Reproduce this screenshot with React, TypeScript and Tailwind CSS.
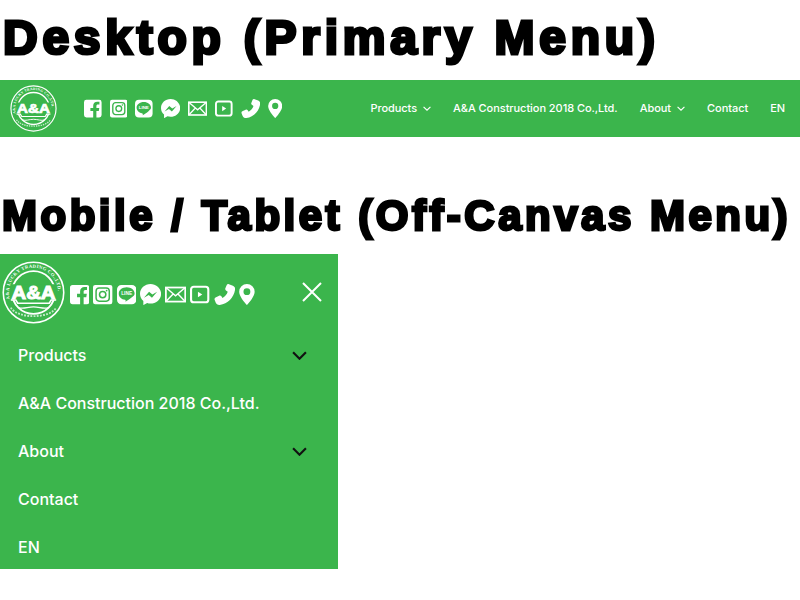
import { useId } from 'react';

const GREEN = '#3bb54c';

const icons = [
  { name: 'facebook', w: 22, box: '1 0 22 24' },
  { name: 'instagram', w: 22, box: '1 0 22 24' },
  { name: 'line', w: 22, box: '1 0 22 24' },
  { name: 'messenger', w: 24, box: '1 1 24 24' },
  { name: 'mail', w: 24, box: '1 -2 24 24' },
  { name: 'youtube', w: 22, box: '1 0 22 24' },
  { name: 'phone', w: 24, box: '1 1 24 24' },
  { name: 'pin', w: 18, box: '0 0 18 24' },
];

function IconShape({ name }: { name: string }) {
  switch (name) {
    case 'facebook':
      return (
        <path
          fillRule="evenodd"
          d="M4 1h16a3 3 0 0 1 3 3v16a3 3 0 0 1-3 3h-3.500v-8h3l.6-3.800h-3.600V8.800c0-1.200.5-2 2-2h1.800V3.500c-.8-.1-1.800-.2-2.800-.2-3 0-5 1.800-5 5v2.900H9v3.800h3.500v8H4a3 3 0 0 1-3-3V4a3 3 0 0 1 3-3z"
          fill="white"
        />
      );
    case 'instagram':
      return (
        <g>
          <rect x="1" y="1" width="22" height="22" rx="2.500" fill="white" />
          <rect x="4.500" y="4.500" width="15" height="15" rx="3.500" fill="none" stroke={GREEN} strokeWidth="1.700" />
          <circle cx="12" cy="12" r="3.600" fill="none" stroke={GREEN} strokeWidth="1.700" />
          <circle cx="16.500" cy="7.500" r="1" fill={GREEN} />
        </g>
      );
    case 'line':
      return (
        <g>
          <rect x="1" y="1" width="22" height="22" rx="5" fill="white" />
          <path d="M12 3.800c-5 0-9 3.200-9 7.200 0 3.500 3 6.400 7.200 7 .9.200.6 1.300.4 2.200 2-1 5-3 7.300-5 1.500-1.400 3.100-2.500 3.100-4.200 0-4-4-7.200-9-7.200z" fill={GREEN} />
          <text x="12" y="13" textAnchor="middle" fontSize="5.500" fontWeight="700" fill="white" fontFamily="'Liberation Sans', sans-serif">LINE</text>
        </g>
      );
    case 'messenger':
      return (
        <g>
          <path d="M13 1C6.400 1 1 5.900 1 12.200c0 3.300 1.400 6.100 3.800 8.100V25l4.300-2.400c1.200.4 2.600.6 3.900.6 6.600 0 12-5 12-11S19.600 1 13 1z" fill="white" />
          <path d="M5.500 16.500l5.800-6.800 3.800 3.200 5.400-3.200-5.900 7-3.700-3.200z" fill={GREEN} />
        </g>
      );
    case 'mail':
      return (
        <g fill="none" stroke="white">
          <rect x="2" y="2" width="22" height="16" strokeWidth="2" />
          <path d="M2 2l11 9.500L24 2M2 18l8.500-9M24 18l-8.500-9" strokeWidth="1.600" />
        </g>
      );
    case 'youtube':
      return (
        <g>
          <rect x="2.200" y="3.200" width="19.600" height="17.600" rx="3" fill="none" stroke="white" strokeWidth="2.400" />
          <path d="M10 8.800v6.400l5-3.200z" fill="white" />
        </g>
      );
    case 'phone':
      return (
        <path
          d="M18 1.200l4.500 1.800c1.700.8 2.700 2 2.500 4C24 16 17 23.600 7.500 24.800c-2.200.2-3.800-.7-4.600-2.700l-1.200-3.300c-.4-1 .1-2 1-2.500l4.100-2c1-.4 2-.2 2.600.7l1.200 1.800c3-1.500 5-4 6-7l-2-1.500c-.8-.6-1-1.500-.7-2.400l1.600-3.900c.4-.9 1.500-1.200 2.500-.8z"
          fill="white"
        />
      );
    default:
      return (
        <path
          fillRule="evenodd"
          d="M9 0a8.800 8.800 0 0 1 8.800 8.800C17.800 14 12 20.500 9 24 6 20.500.2 14 .2 8.800A8.800 8.800 0 0 1 9 0zm0 4.800a3.900 3.900 0 1 0 0 7.800 3.900 3.900 0 0 0 0-7.800z"
          fill="white"
        />
      );
  }
}

function Logo({ size }: { size: number }) {
  const id = useId();
  return (
    <svg width={size} height={size} viewBox="0 0 100 100" className="shrink-0">
      <defs>
        <path id={id} d="M13 62a39 39 0 1 1 74 0" />
      </defs>
      <circle cx="50" cy="50" r="48" fill="none" stroke="white" strokeWidth="2.500" />
      <circle cx="50" cy="50" r="34" fill="none" stroke="white" strokeWidth="3" />
      <text fontSize="7.500" fontWeight="700" fill="white" letterSpacing="0.6" fontFamily="'Liberation Serif', serif">
        <textPath href={`#${id}`} startOffset="1%">A&A LUCKY TRADING CO.,LTD.</textPath>
      </text>
      <path d="M14 37h72v25H14z" fill={GREEN} />
      <path d="M14 62h8l3 5h50l3-5h8" fill="none" stroke="white" strokeWidth="2.500" />
      <path d="M26 74c8 3 14-1 24-1s16 4 24 1" fill="none" stroke="white" strokeWidth="2" />
      <text x="50" y="60" textAnchor="middle" fontSize="29" fontWeight="700" fill="white" stroke="white" strokeWidth="1.500" textLength="70" lengthAdjust="spacingAndGlyphs" fontFamily="'Liberation Sans', sans-serif">A&A</text>
      <path d="M14 74c10 18 62 18 72 0" fill="none" stroke="white" strokeWidth="3" strokeDasharray="3 2" opacity="0.7" />
    </svg>
  );
}

function Socials({ scale, gap }: { scale: number; gap: string }) {
  return (
    <div className={`flex items-center ${gap}`}>
      {icons.map((icon) => (
        <svg key={icon.name} width={icon.w * scale} height={24 * scale} viewBox={icon.box} className="shrink-0">
          <IconShape name={icon.name} />
        </svg>
      ))}
    </div>
  );
}

function Chevron({ className }: { className: string }) {
  return (
    <svg viewBox="0 0 14 8" fill="none" stroke="currentColor" className={className}>
      <path d="M1 1l6 6 6-6" strokeWidth="2" />
    </svg>
  );
}

const links = [
  { label: 'Products', arrow: true },
  { label: 'A&A Construction 2018 Co.,Ltd.', arrow: false },
  { label: 'About', arrow: true },
  { label: 'Contact', arrow: false },
  { label: 'EN', arrow: false },
];

function App() {
  return (
    <div className="h-[600px] w-[800px] overflow-hidden bg-white font-['Liberation_Sans',sans-serif]">
      <h1 className="flex h-[80px] items-center whitespace-nowrap pb-[4px] pl-[3px] text-[48px] font-bold leading-none tracking-[4.75px] text-black will-change-transform [-webkit-text-stroke:3.2px_black]">
        Desktop (Primary Menu)
      </h1>

      <nav className="flex h-[57px] items-center bg-[#3bb54c] pl-[10px] pr-[15px]">
        <Logo size={47} />
        <div className="ml-[27px]">
          <Socials scale={0.8} gap="gap-[8px]" />
        </div>
        <ul className="ml-auto flex items-center gap-[22px] font-['Inter',sans-serif] text-[11px] font-medium tracking-[-0.05px] text-white">
          {links.map((link) => (
            <li key={link.label} className="flex items-center gap-[6px] whitespace-nowrap">
              {link.label}
              {link.arrow && <Chevron className="h-[5px] w-[8px]" />}
            </li>
          ))}
        </ul>
      </nav>

      <h1 className="flex h-[117px] items-end whitespace-nowrap pb-[17px] pl-[2px] text-[42px] font-bold leading-none tracking-[3.5px] text-black will-change-transform [-webkit-text-stroke:2.8px_black]">
        Mobile / Tablet (Off-Canvas Menu)
      </h1>

      <aside className="w-[338px] bg-[#3bb54c]">
        <div className="flex h-[77px] items-center pl-[2px] pr-[16px]">
          <Logo size={63} />
          <div className="ml-[5px] mt-[4px]">
            <Socials scale={0.88} gap="gap-[4px]" />
          </div>
          <svg viewBox="0 0 20 20" className="ml-auto mb-[2px] h-[20px] w-[20px] text-white" fill="none" stroke="currentColor">
            <path d="M1 1l18 18M19 1L1 19" strokeWidth="2" />
          </svg>
        </div>
        <ul className="font-['Inter',sans-serif] text-[16px] font-medium text-white">
          {links.map((link, i) => (
            <li
              key={link.label}
              className={`flex items-center justify-between pl-[18px] pr-[31px] ${i === links.length - 1 ? 'h-[46px] pt-[2px]' : 'h-[48px]'}`}
            >
              {link.label}
              {link.arrow && <Chevron className="h-[9px] w-[15px] text-[#111]" />}
            </li>
          ))}
        </ul>
      </aside>
    </div>
  );
}

export default App;
